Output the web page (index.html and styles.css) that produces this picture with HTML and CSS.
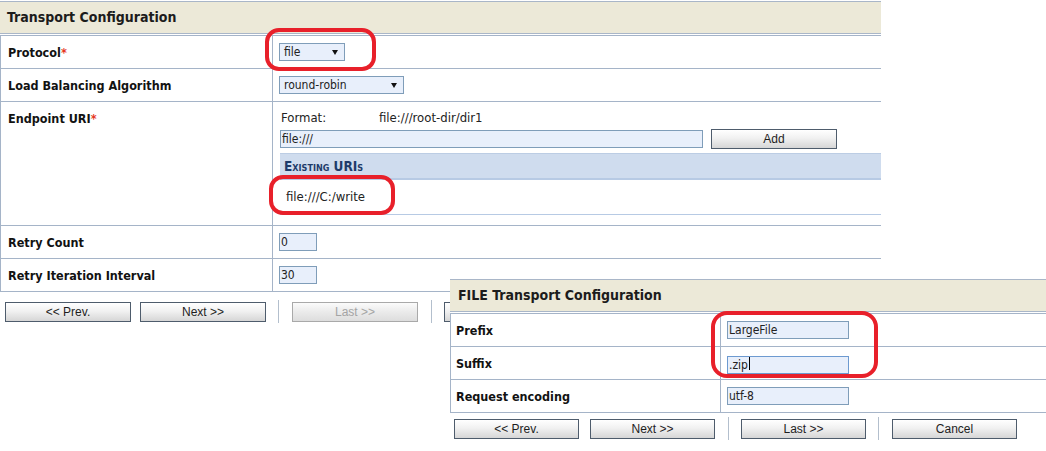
FILE: index.html
```html
<!DOCTYPE html>
<html>
<head>
    <link rel="stylesheet" href="styles.css">
</head>
<body>
<div class="screen">
    <div class="panel main-panel">
        <div class="panel-title">Transport Configuration</div>
        <div class="rows">
            <div class="row">
                <div class="label">Protocol<span class="req">*</span></div>
                <div class="field">
                    <div class="select select-sm">file<span class="arrow"></span></div>
                </div>
            </div>
            <div class="row">
                <div class="label">Load Balancing Algorithm</div>
                <div class="field">
                    <div class="select select-md">round-robin<span class="arrow"></span></div>
                </div>
            </div>
            <div class="row">
                <div class="label">Endpoint URI<span class="req">*</span></div>
                <div class="field endpoint">
                    <div class="format"><span class="format-label">Format:</span>file:///root-dir/dir1</div>
                    <div class="uri-add">
                        <input type="text" class="text-input uri-input" value="file:///">
                        <button type="button" class="btn">Add</button>
                    </div>
                    <div class="existing">
                        <div class="existing-head">Existing URIs</div>
                        <div class="existing-item">file:///C:/write</div>
                    </div>
                </div>
            </div>
            <div class="row">
                <div class="label">Retry Count</div>
                <div class="field">
                    <input type="text" class="text-input input-xs" value="0">
                </div>
            </div>
            <div class="row">
                <div class="label">Retry Iteration Interval</div>
                <div class="field">
                    <input type="text" class="text-input input-xs" value="30">
                </div>
            </div>
        </div>
        <div class="buttons main-buttons">
            <button type="button" class="btn">&lt;&lt; Prev.</button>
            <button type="button" class="btn">Next &gt;&gt;</button>
            <span class="sep"></span>
            <button type="button" class="btn" disabled>Last &gt;&gt;</button>
            <span class="sep sep-alt"></span>
            <button type="button" class="btn">Cancel</button>
        </div>
    </div>

    <div class="panel file-panel">
        <div class="panel-title">FILE Transport Configuration</div>
        <div class="rows">
            <div class="row">
                <div class="label">Prefix</div>
                <div class="field">
                    <input type="text" class="text-input input-md" value="LargeFile">
                </div>
            </div>
            <div class="row">
                <div class="label">Suffix</div>
                <div class="field">
                    <span class="caret-wrap">
                        <input type="text" class="text-input input-md focused" value=".zip">
                        <span class="caret"></span>
                    </span>
                </div>
            </div>
            <div class="row">
                <div class="label">Request encoding</div>
                <div class="field">
                    <input type="text" class="text-input input-md" value="utf-8">
                </div>
            </div>
        </div>
        <div class="buttons file-buttons">
            <button type="button" class="btn">&lt;&lt; Prev.</button>
            <button type="button" class="btn">Next &gt;&gt;</button>
            <span class="sep"></span>
            <button type="button" class="btn">Last &gt;&gt;</button>
            <span class="sep sep-alt"></span>
            <button type="button" class="btn">Cancel</button>
        </div>
    </div>

    <!-- red annotation rings -->
    <div class="mark mark-protocol"></div>
    <div class="mark mark-uri"></div>
    <div class="mark mark-prefix"></div>
</div>
</body>
</html>
```

FILE: styles.css
```css
*{
    margin: 0;
    padding: 0;
    box-sizing: border-box;
}
body {
    background: #fff;
    font-family: "DejaVu Sans Condensed", "DejaVu Sans", sans-serif;
    color: #111;
}

.screen {
    position: relative;
    width: 1046px;
    height: 451px;
    overflow: hidden;
}

.main-panel {
    width: 881px;
    padding-top: 1px;
}

.panel-title {
    height: 33px;
    border-top: 1px solid #a9b6c8;
    border-bottom: 1px solid #a9b6c8;
    background: #ece9d8;
    padding-left: 7px;
    line-height: 31px;
    font-size: 14px;
    font-weight: bold;
    color: #1c1c1c;
}

.rows {
    margin-top: 1px;
    border-top: 1px solid #a5b4c8;
    border-left: 1px solid #a5b4c8;
}

.row {
    display: grid;
    grid-template-columns: 272px 1fr;
    border-bottom: 1px solid #a5b4c8;
}

.label {
    min-height: 32px;
    border-right: 1px solid #a5b4c8;
    padding: 9px 0 0 7px;
    line-height: 16px;
    font-size: 12.5px;
    font-weight: bold;
    color: #121212;
}

.req {
    color: #e5381e;
}

.field {
    display: flex;
    align-items: center;
    padding-left: 6px;
}

.select {
    position: relative;
    height: 18px;
    border: 1px solid #7f9db9;
    background: #e8effb;
    padding-left: 4px;
    line-height: 16px;
    font-size: 12px;
    color: #222;
}

.select-sm { width: 66px; }
.select-md { width: 125px; }

.arrow {
    position: absolute;
    right: 6px;
    top: 6px;
    border-left: 3px solid transparent;
    border-right: 3px solid transparent;
    border-top: 5px solid #111;
}

.text-input {
    height: 18px;
    border: 1px solid #7f9db9;
    background: #e8effb;
    padding: 0 1px;
    font-family: "DejaVu Sans Condensed", "DejaVu Sans", sans-serif;
    font-size: 12px;
    color: #222;
    outline: none;
}

.input-xs { width: 38px; }
.input-md { width: 122px; }

.focused {
    border-color: #6d9ad0;
}

.caret-wrap {
    position: relative;
    display: block;
    height: 18px;
}

.caret {
    position: absolute;
    left: 22px;
    top: 3px;
    width: 1px;
    height: 13px;
    background: #000;
}

/* endpoint uri cell */
.endpoint {
    display: block;
    padding: 8px 0 10px 7px;
}

.format {
    line-height: 16px;
    font-size: 13px;
    color: #222;
}

.format-label {
    display: inline-block;
    width: 99px;
    padding-left: 1px;
}

.uri-add {
    display: flex;
    align-items: center;
    gap: 8px;
    margin-top: 3px;
    height: 20px;
}

.uri-input {
    width: 423px;
}

.existing {
    margin-top: 4px;
}

.existing-head {
    height: 27px;
    border-top: 1px solid #bccde4;
    border-bottom: 2px solid #b7cae4;
    background: #cfdcee;
    padding-left: 4px;
    line-height: 25px;
    font-size: 13.5px;
    font-weight: bold;
    font-variant: small-caps;
    color: #1e3b6a;
}

.existing-item {
    height: 35px;
    border-bottom: 1px solid #b7cae4;
    padding-left: 6px;
    line-height: 33px;
    font-size: 13px;
    color: #222;
}

/* wizard buttons */
.buttons {
    display: flex;
    align-items: center;
}

.btn {
    width: 126px;
    height: 20px;
    border: 1px solid #4e5c6c;
    background: linear-gradient(#ffffff, #f1f1f1 45%, #d6d6d6);
    font-family: "Liberation Sans", Arial, sans-serif;
    font-size: 12px;
    color: #1e1e1e;
}

.btn + .btn {
    margin-left: 9px;
}

.btn:disabled {
    border-color: #a9a9a9;
    color: #a4a4a4;
    background: linear-gradient(#fbfbfb, #ececec 45%, #dddddd);
}

.sep {
    width: 1px;
    height: 23px;
    background: #b3bfcd;
    margin: 0 13px 0 12px;
}

.sep-alt {
    margin: 0 12px 0 13px;
}

.main-buttons {
    padding: 8px 0 0 5px;
}

.file-buttons {
    padding: 4px 0 0 4px;
}

.file-buttons .btn {
    width: 125px;
}

.file-buttons .btn + .btn {
    margin-left: 11px;
}

.file-buttons .sep {
    margin: 0 12px 0 13px;
}

.file-buttons .sep-alt {
    margin: 0 13px 0 12px;
}

/* second screenshot lying over the first */
.file-panel {
    position: absolute;
    left: 450px;
    top: 278px;
    right: 0;
    bottom: 0;
    background: #fff;
    padding-top: 1px;
}

.file-panel .panel-title {
    padding-left: 8px;
}

.file-panel .row {
    grid-template-columns: 270px 1fr;
}

.file-panel .label {
    padding-left: 5px;
}

/* red annotation rings */
.mark {
    position: absolute;
    border: 4px solid #e8202a;
    border-radius: 14px;
}

.mark-protocol {
    left: 265px;
    top: 28px;
    width: 111px;
    height: 43px;
}

.mark-uri {
    left: 269px;
    top: 175px;
    width: 126px;
    height: 40px;
}

.mark-prefix {
    left: 711px;
    top: 311px;
    width: 167px;
    height: 67px;
    border-radius: 16px;
}
```
